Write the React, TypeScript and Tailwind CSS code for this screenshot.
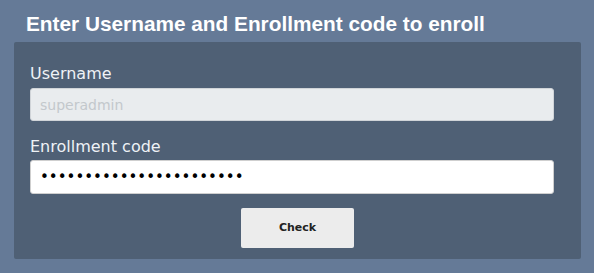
export default function App() {
  return (
    <div className="min-h-[273px] bg-[#657a97] pl-[14px] pr-[13px] pt-[12px] pb-[14px]">
      <h2 className="pl-[12px] text-[20.8px] font-bold leading-[24px] text-white font-['Liberation_Sans',Arial,sans-serif]">
        Enter Username and Enrollment code to enroll
      </h2>
      <div className="mt-[6px] rounded-[2px] bg-[#4f6075] px-[16px] pt-[23px] pb-[11px] font-['DejaVu_Sans',sans-serif]">
        <label className="block h-[18px] text-[16px] leading-[18px] text-[#eef2f6]">Username</label>
        <input
          type="text"
          disabled
          value="superadmin"
          readOnly
          className="mt-[5px] block h-[33px] w-[524px] rounded-[3px] border border-[#d0d4d8] bg-[#e9ecee] px-[9px] text-[14px] text-[#c3c8cc]"
        />
        <label className="mt-[17px] block h-[18px] text-[16px] leading-[18px] text-[#eef2f6]">Enrollment code</label>
        <input
          type="password"
          value="aaaaaaaaaaaaaaaaaaaaaaa"
          readOnly
          className="mt-[4px] block h-[34px] w-[524px] rounded-[3px] border border-[#cfcfcf] bg-white px-[9px] text-[15px] text-black"
        />
        <div className="mt-[14px] flex justify-center">
          <button className="h-[40px] w-[113px] rounded-[2px] bg-[#ececec] pt-[1px] text-[11px] font-bold text-[#222]">
            Check
          </button>
        </div>
      </div>
    </div>
  );
}
